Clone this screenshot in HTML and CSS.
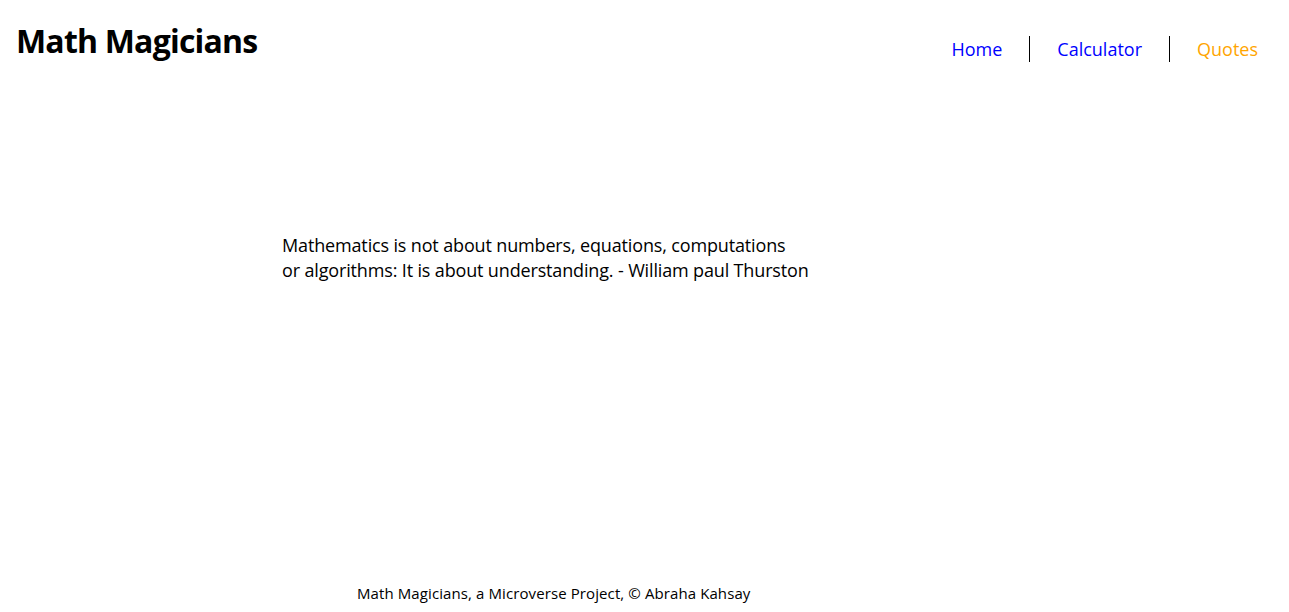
FILE: index.html
```html
<!DOCTYPE html>
<html lang="en">
<head>
<meta charset="utf-8">
<title>Math Magicians</title>
<link rel="stylesheet" href="styles.css">
</head>
<body>
<div class="page">
  <header class="site-header">
    <h1 class="brand">Math Magicians</h1>
    <nav class="nav">
      <ul class="nav-list">
        <li class="nav-item"><a class="nav-link" href="#">Home</a></li>
        <li class="nav-item"><a class="nav-link" href="#">Calculator</a></li>
        <li class="nav-item"><a class="nav-link active" href="#">Quotes</a></li>
      </ul>
    </nav>
  </header>
  <main class="content">
    <p class="quote">Mathematics is not about numbers, equations, computations<br>or algorithms: It is about understanding. - William paul Thurston</p>
  </main>
  <footer class="site-footer">
    <p class="footer-text">Math Magicians, a Microverse Project, © Abraha Kahsay</p>
  </footer>
</div>
</body>
</html>
```

FILE: styles.css
```css
* { box-sizing: border-box; }

html, body {
  margin: 0;
  padding: 0;
  background: #fff;
  color: #000;
  font-family: "Open Sans", "Noto Sans", sans-serif;
}

.page {
  min-height: 100vh;
  display: flex;
  flex-direction: column;
}

.site-header {
  display: flex;
  justify-content: space-between;
  align-items: flex-start;
  padding: 0 4px 0 16px;
}

.brand {
  margin: 21px 0 0;
  font-size: 32px;
  line-height: 40px;
  font-weight: 700;
  letter-spacing: -0.8px;
}

.nav-list {
  list-style: none;
  display: flex;
  margin: 36px 0 0;
  padding: 0;
}

.nav-item {
  padding: 0 27px;
  font-size: 18px;
  line-height: 26px;
}

.nav-item + .nav-item {
  border-left: 1px solid #000;
}

.nav-link {
  color: #00f;
  text-decoration: none;
}

.nav-link.active {
  color: #ffa500;
}

.content {
  flex: 1;
  padding: 0 0 0 282px;
}

.quote {
  margin: 171px 0 0;
  font-size: 18px;
  line-height: 25px;
  letter-spacing: -0.15px;
}

.site-footer {
  padding: 0 0 9px 357px;
}

.footer-text {
  margin: 0;
  font-size: 15px;
  line-height: 20px;
  letter-spacing: 0.1px;
}
```
